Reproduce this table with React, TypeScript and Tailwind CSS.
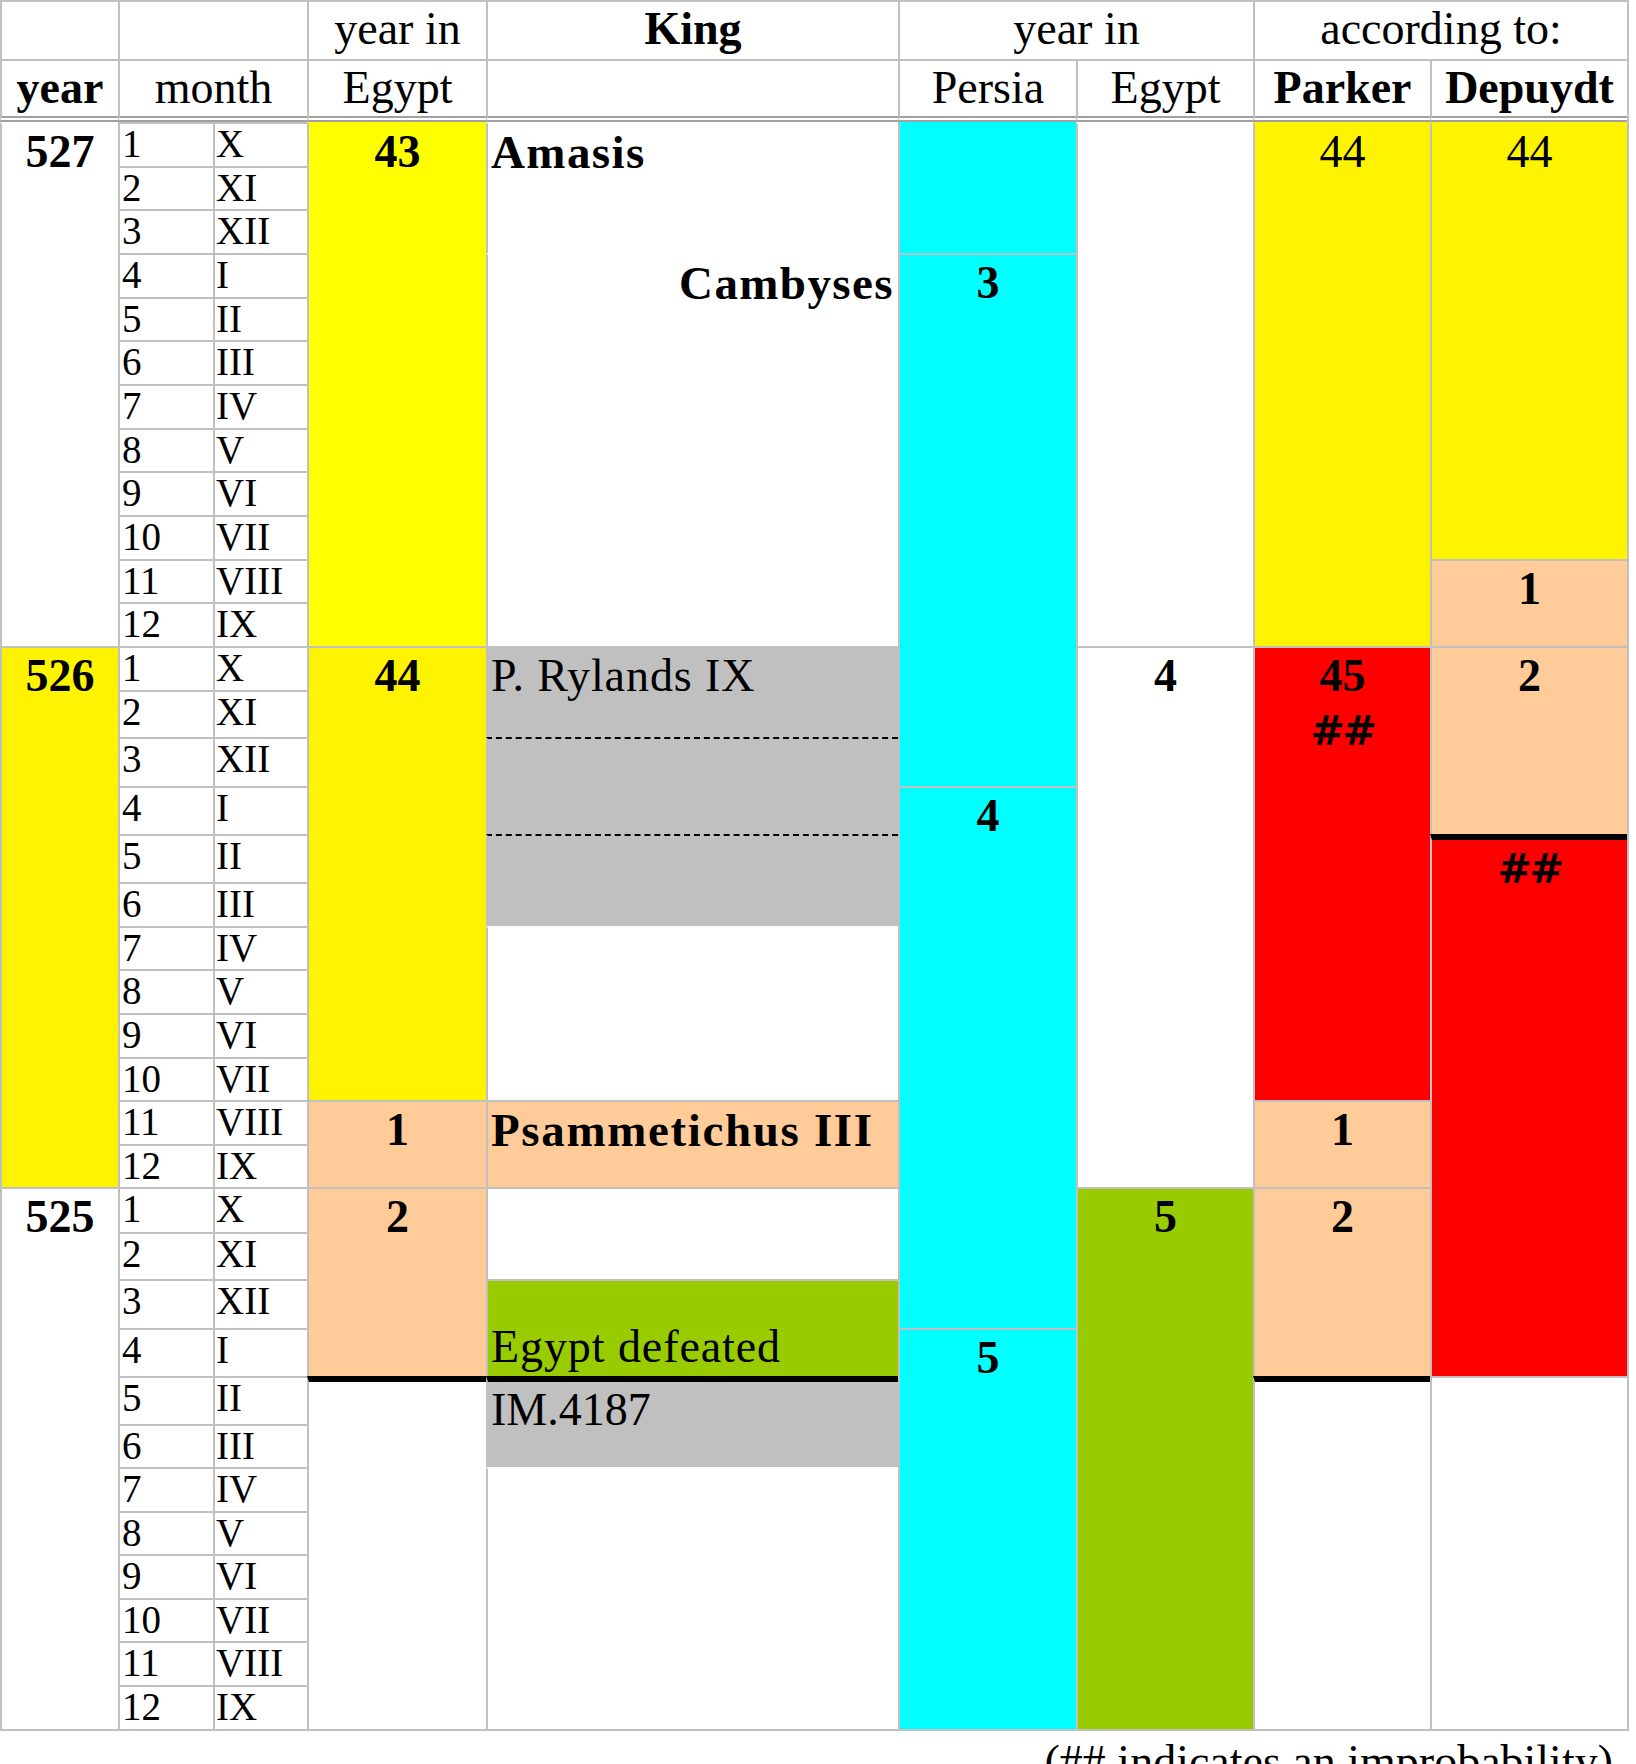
import type { ReactNode } from "react";

type Top = "none" | "gray" | "black" | "dash";

const TOP: Record<Top, string> = {
  none: "border-t-2 border-t-transparent",
  gray: "border-t-2 border-t-[#c0c0c0]",
  black: "border-t-[6px] border-t-black",
  dash: "border-t-2 border-t-black [border-top-style:dashed]",
};

type Block = { at: number; cls: string; top: Top; body?: ReactNode };

const MONTHS: [string, string][] = [
  ["1", "X"], ["2", "XI"], ["3", "XII"], ["4", "I"], ["5", "II"], ["6", "III"],
  ["7", "IV"], ["8", "V"], ["9", "VI"], ["10", "VII"], ["11", "VIII"], ["12", "IX"],
];

// the # glyph of the serif fallback is too narrow, so borrow DejaVu's
const Hash = () => <span className="font-['DejaVu_Sans',sans-serif] text-[41px] tracking-[-0.06em]">##</span>;

// columns other than the two month columns, in table order
const YEAR: Block[] = [
  { at: 1, cls: "row-span-[12] text-center font-bold", top: "none", body: "527" },
  { at: 13, cls: "row-span-[12] bg-[#fff400] text-center font-bold", top: "gray", body: "526" },
  { at: 25, cls: "row-span-[12] text-center font-bold", top: "gray", body: "525" },
];

const EGYPT_YEAR: Block[] = [
  { at: 1, cls: "row-span-[12] bg-[#ffff00] text-center font-bold", top: "none", body: "43" },
  { at: 13, cls: "row-span-[10] bg-[#fff400] text-center font-bold", top: "gray", body: "44" },
  { at: 23, cls: "row-span-[2] bg-[#ffcc99] text-center font-bold", top: "gray", body: "1" },
  { at: 25, cls: "row-span-[4] bg-[#ffcc99] text-center font-bold", top: "gray", body: "2" },
  { at: 29, cls: "row-span-[8]", top: "black" },
];

const KING: Block[] = [
  { at: 1, cls: "row-span-[3] pl-[3px] text-[47px] font-bold tracking-[0.03em]", top: "none", body: "Amasis" },
  { at: 4, cls: "row-span-[9] pr-[4px] text-right text-[47px] font-bold tracking-[0.03em]", top: "none", body: "Cambyses" },
  { at: 13, cls: "row-span-[2] bg-[#c0c0c0] pl-[3px] tracking-[0.02em]", top: "gray", body: "P. Rylands IX" },
  { at: 15, cls: "row-span-[2] bg-[#c0c0c0]", top: "dash" },
  { at: 17, cls: "row-span-[2] bg-[#c0c0c0]", top: "dash" },
  { at: 19, cls: "row-span-[4]", top: "none" },
  { at: 23, cls: "row-span-[2] bg-[#ffcc99] pl-[3px] text-[47px] font-bold tracking-[0.035em]", top: "gray", body: "Psammetichus III" },
  { at: 25, cls: "row-span-[2]", top: "gray" },
  { at: 27, cls: "row-span-[2] flex flex-col justify-end bg-[#99cc00] pb-[6px] pl-[3px] tracking-[0.02em]", top: "gray", body: "Egypt defeated" },
  { at: 29, cls: "row-span-[2] bg-[#c0c0c0] pl-[3px]", top: "black", body: "IM.4187" },
  { at: 31, cls: "row-span-[6]", top: "none" },
];

const PERSIA: Block[] = [
  { at: 1, cls: "row-span-[3] bg-[#00ffff]", top: "none" },
  { at: 4, cls: "row-span-[12] bg-[#00ffff] text-center font-bold", top: "gray", body: "3" },
  { at: 16, cls: "row-span-[12] bg-[#00ffff] text-center font-bold", top: "gray", body: "4" },
  { at: 28, cls: "row-span-[9] bg-[#00ffff] text-center font-bold", top: "gray", body: "5" },
];

const EGYPT: Block[] = [
  { at: 1, cls: "row-span-[12]", top: "none" },
  { at: 13, cls: "row-span-[12] text-center font-bold", top: "gray", body: "4" },
  { at: 25, cls: "row-span-[12] bg-[#99cc00] text-center font-bold", top: "gray", body: "5" },
];

const PARKER: Block[] = [
  { at: 1, cls: "row-span-[12] bg-[#fff400] text-center", top: "none", body: "44" },
  {
    at: 13,
    cls: "row-span-[10] bg-[#ff0000] text-center font-bold",
    top: "gray",
    body: (
      <>
        <div>45</div>
        <div className="mt-[8px]">
          <Hash />
        </div>
      </>
    ),
  },
  { at: 23, cls: "row-span-[2] bg-[#ffcc99] text-center font-bold", top: "gray", body: "1" },
  { at: 25, cls: "row-span-[4] bg-[#ffcc99] text-center font-bold", top: "gray", body: "2" },
  { at: 29, cls: "row-span-[8]", top: "black" },
];

const DEPUYDT: Block[] = [
  { at: 1, cls: "row-span-[10] bg-[#fff400] text-center", top: "none", body: "44" },
  { at: 11, cls: "row-span-[2] bg-[#ffcc99] text-center font-bold", top: "gray", body: "1" },
  { at: 13, cls: "row-span-[4] bg-[#ffcc99] text-center font-bold", top: "gray", body: "2" },
  { at: 17, cls: "row-span-[12] bg-[#ff0000] text-center font-bold", top: "black", body: <Hash /> },
  { at: 29, cls: "row-span-[8]", top: "gray" },
];

const LEFT = "border-l-2 border-l-[#c0c0c0]";
const HEAD1 = `${LEFT} border-t-2 border-t-[#c0c0c0] pt-[4px] text-center`;
const HEAD2 = `${LEFT} border-t-2 border-t-[#c0c0c0] border-b-[6px] border-b-[#a0a0a0] [border-bottom-style:double] pt-[4px] text-center`;

const block = (b: Block, key: string) => (
  <div key={key} className={`${TOP[b.top]} ${LEFT} pt-[5px] text-[46px] leading-none ${b.cls}`}>
    {b.body}
  </div>
);

const rows = () => {
  const out: ReactNode[] = [];
  for (let r = 1; r <= 36; r++) {
    const y = YEAR.find((b) => b.at === r);
    if (y) out.push(block(y, `y${r}`));
    const [num, roman] = MONTHS[(r - 1) % 12];
    out.push(
      <div key={`n${r}`} className={`${TOP.gray} ${LEFT} pl-[2px] text-[39px] leading-none`}>{num}</div>,
      <div key={`m${r}`} className={`${TOP.gray} ${LEFT} pl-[1px] text-[39px] leading-none`}>{roman}</div>,
    );
    [EGYPT_YEAR, KING, PERSIA, EGYPT, PARKER, DEPUYDT].forEach((col, i) => {
      const b = col.find((c) => c.at === r);
      if (b) out.push(block(b, `c${i}-${r}`));
    });
  }
  return out;
};

export default function App() {
  return (
    <div className="min-h-screen bg-white font-['Liberation_Serif',serif] text-black">
      <div className="grid w-fit grid-cols-[118px_95px_94px_179px_412px_178px_177px_177px_197px] grid-rows-[59px_63px_44px_43px_44px_44px_43px_44px_44px_43px_44px_44px_43px_44px_44px_47px_49px_48px_48px_44px_43px_44px_44px_43px_44px_43px_45px_47px_49px_48px_48px_43px_44px_43px_44px_43px_44px_44px] border-r-2 border-b-2 border-r-[#c0c0c0] border-b-[#c0c0c0] text-[46px] leading-none">
        <div className={HEAD1} />
        <div className={`${HEAD1} col-span-2`} />
        <div className={HEAD1}>year in</div>
        <div className={`${HEAD1} font-bold`}>King</div>
        <div className={`${HEAD1} col-span-2`}>year in</div>
        <div className={`${HEAD1} col-span-2`}>according to:</div>

        <div className={`${HEAD2} font-bold`}>year</div>
        <div className={`${HEAD2} col-span-2`}>month</div>
        <div className={HEAD2}>Egypt</div>
        <div className={HEAD2} />
        <div className={HEAD2}>Persia</div>
        <div className={HEAD2}>Egypt</div>
        <div className={`${HEAD2} font-bold`}>Parker</div>
        <div className={`${HEAD2} font-bold`}>Depuydt</div>

        {rows()}
      </div>
      <div className="mt-[8px] w-[1629px] pr-[16px] text-right text-[46px] leading-none">
        (## indicates an improbability)
      </div>
    </div>
  );
}
